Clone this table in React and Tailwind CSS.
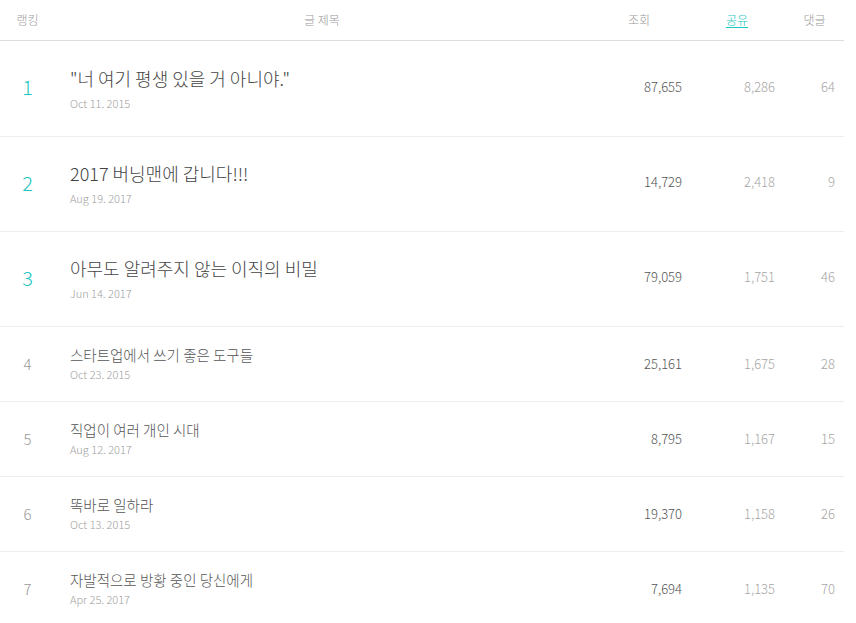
import React from 'react';

const posts = [
  { rank: 1, title: '"너 여기 평생 있을 거 아니야."', date: 'Oct 11. 2015', views: '87,655', shares: '8,286', comments: '64' },
  { rank: 2, title: '2017 버닝맨에 갑니다!!!', date: 'Aug 19. 2017', views: '14,729', shares: '2,418', comments: '9' },
  { rank: 3, title: '아무도 알려주지 않는 이직의 비밀', date: 'Jun 14. 2017', views: '79,059', shares: '1,751', comments: '46' },
  { rank: 4, title: '스타트업에서 쓰기 좋은 도구들', date: 'Oct 23. 2015', views: '25,161', shares: '1,675', comments: '28' },
  { rank: 5, title: '직업이 여러 개인 시대', date: 'Aug 12. 2017', views: '8,795', shares: '1,167', comments: '15' },
  { rank: 6, title: '똑바로 일하라', date: 'Oct 13. 2015', views: '19,370', shares: '1,158', comments: '26' },
  { rank: 7, title: '자발적으로 방황 중인 당신에게', date: 'Apr 25. 2017', views: '7,694', shares: '1,135', comments: '70' },
];

const grid = 'grid grid-cols-[55px_534px_100px_96px_59px] items-center';

const rowHeight = rank => {
  if (rank === 1) return 'h-[96px]';
  if (rank <= 3) return 'h-[95px]';
  return 'h-[75px]';
};

const App = () => {
  return (
    <div className="w-[844px] bg-white font-['Noto_Sans_CJK_KR',sans-serif] font-light">
      <div className={`${grid} h-[41px] border-b border-[#dddddd] text-[12px] text-[#999999]`}>
        <div className="text-center">랭킹</div>
        <div className="text-center">글 제목</div>
        <div className="text-center">조회</div>
        <div className="text-center">
          <span className="text-[#1bc6c0] underline underline-offset-2">공유</span>
        </div>
        <div className="text-center">댓글</div>
      </div>

      {posts.map(post => {
        const top = post.rank <= 3;
        // top rows: single-line cells sit a bit above the title block's centre
        const lift = top ? 'mb-[4px]' : '';
        return (
          <div key={post.rank} className={`${grid} border-b border-[#eeeeee] ${rowHeight(post.rank)}`}>
            <div
              className={
                top
                  ? 'text-center text-[20px] text-[#1bc6c0] mb-[3px]'
                  : 'text-center text-[15px] text-[#999999]'
              }
            >
              {post.rank}
            </div>
            <div className="pl-[15px]">
              <div
                className={
                  top
                    ? 'text-[18px] leading-[24px] text-[#444444]'
                    : 'text-[14.5px] leading-[20px] text-[#555555]'
                }
              >
                {post.title}
              </div>
              <div className={`text-[11px] text-[#a0a0a0] ${top ? 'mt-[5px]' : 'mt-[1px]'}`}>
                {post.date}
              </div>
            </div>
            <div className={`text-right pr-[7px] text-[13px] text-[#555555] ${lift}`}>{post.views}</div>
            <div className={`text-right pr-[10px] text-[13px] text-[#a6a6a6] ${lift}`}>{post.shares}</div>
            <div className={`text-right pr-[9px] text-[13px] text-[#a6a6a6] ${lift}`}>{post.comments}</div>
          </div>
        );
      })}
    </div>
  );
};

export default App;
